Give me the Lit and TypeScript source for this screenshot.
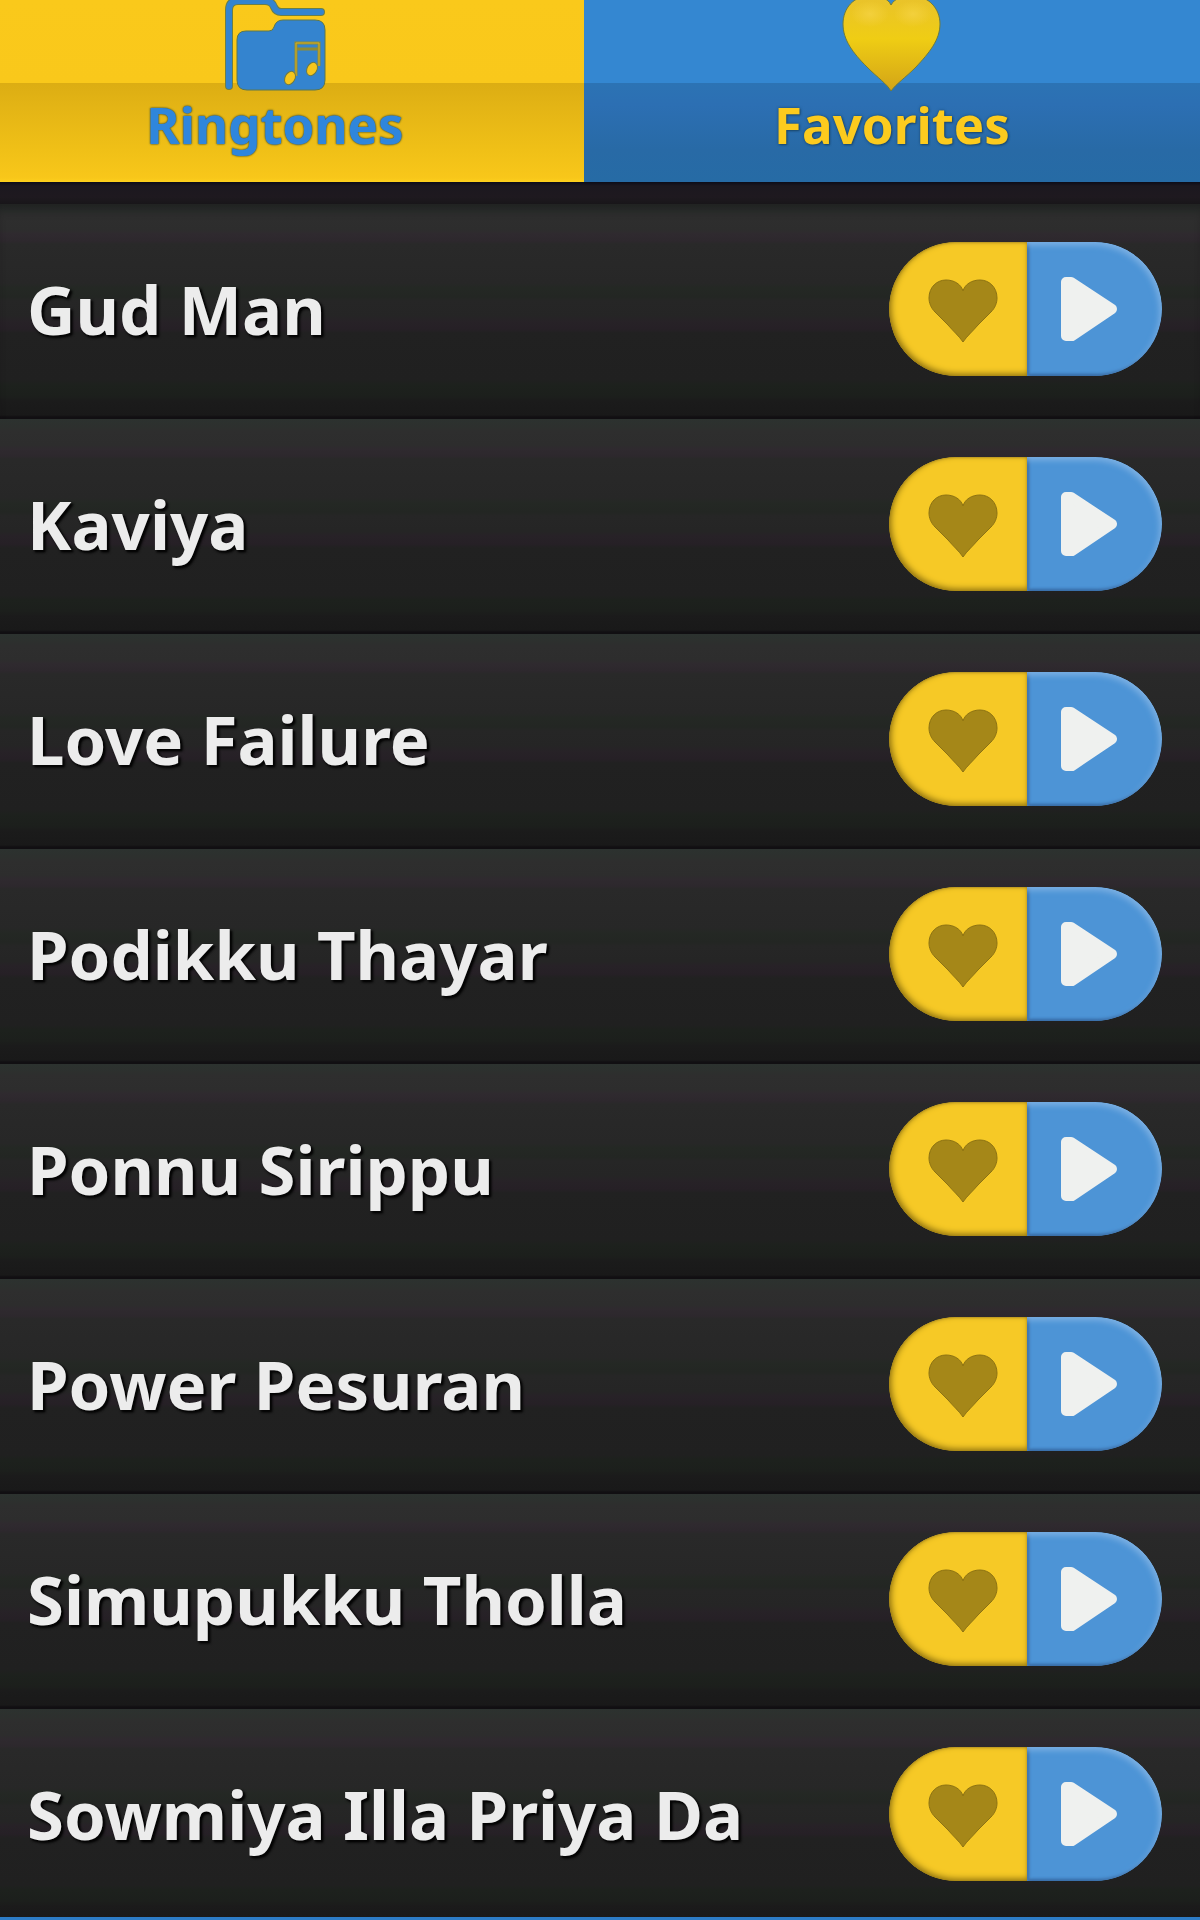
import { LitElement, html, css } from "lit";
import { customElement, property, state } from "lit/decorators.js";
import { classMap } from "lit/directives/class-map.js";

const TRACKS = [
  "Gud Man",
  "Kaviya",
  "Love Failure",
  "Podikku Thayar",
  "Ponnu Sirippu",
  "Power Pesuran",
  "Simupukku Tholla",
  "Sowmiya Illa Priya Da",
];

@customElement("ringtone-row")
class RingtoneRow extends LitElement {
  @property() name = "";
  @state() private liked = false;

  static styles = css`
    :host {
      display: flex;
      align-items: center;
      justify-content: space-between;
      gap: 24px;
      box-sizing: border-box;
      flex: none;
      height: 215px;
      padding: 0 38px 5px 27px;
      background: linear-gradient(
        #2c322f 0, #2d302e 8px,
        #2e2e2e 12px, #2d2d2d 26px,
        #2f2a2f 30px, #2d282d 37px,
        #292929 40px, #272727 79px,
        #242824 84px, #232623 93px,
        #262626 97px, #252525 112px,
        #272227 117px, #262026 125px,
        #212121 129px, #202020 176px,
        #1d211d 181px, #1c1f1c 192px,
        #1b1b1b 197px, #191919 211px,
        #110f12 213px, #110f12 215px
      );
    }
    .name {
      min-width: 0;
      font-size: 67px;
      line-height: 80px;
      font-weight: 700;
      color: #ececec;
      text-shadow: 2px 2px 2px #050505, 2px 2px 3px #050505;
      white-space: nowrap;
    }
    .pill {
      display: flex;
      flex: none;
      width: 273px;
      height: 134px;
      border-radius: 67px;
      overflow: hidden;
    }
    .pill button {
      display: flex;
      align-items: center;
      justify-content: center;
      box-sizing: border-box;
      flex: 1;
      border: 0;
      margin: 0;
      cursor: pointer;
    }
    .pill .like {
      padding: 4px 0 0 10px;
      background: #f6c926;
      border-radius: 67px 0 0 67px;
      box-shadow: inset 2px -2px 6px #8a6e0e, inset 0 1px 2px #c9a42a;
    }
    .pill .play {
      padding: 0 8px 0 0;
      background: #4d94d6;
      border-radius: 0 67px 67px 0;
      box-shadow: inset -2px 3px 6px #7fb2e4, inset 2px -2px 3px #2d609b;
    }
    svg {
      display: block;
    }
    .heart {
      fill: #a58718;
      stroke: #8c7213;
    }
    .liked .heart {
      fill: #d23c2a;
    }
    .triangle {
      fill: #eff1ef;
      stroke: #eff1ef;
    }
  `;

  render() {
    return html`
      <span class="name">${this.name}</span>
      <span class="pill">
        <button
          class=${classMap({ like: true, liked: this.liked })}
          aria-label="Favorite ${this.name}"
          @click=${() => (this.liked = !this.liked)}
        >
          <svg width="70" height="64" viewBox="0 0 70 64">
            <path class="heart" d="M35 63C31 57 26 53 20 46L7 33C3 29 1 24 1 19C1 8 9 1 18 1C26 1 33 5 35 12C37 5 44 1 52 1C61 1 69 8 69 19C69 24 67 29 63 33L50 46C44 53 39 57 35 63Z" />
          </svg>
        </button>
        <button class="play" aria-label="Play ${this.name}">
          <svg width="70" height="66" viewBox="0 0 70 66">
            <path class="triangle" stroke-width="10" stroke-linejoin="round" d="M11 6H16L57 33L17 60H11Z" />
          </svg>
        </button>
      </span>
    `;
  }
}

@customElement("app-root")
class AppRoot extends LitElement {
  static styles = css`
    :host {
      display: flex;
      flex-direction: column;
      height: 100vh;
      overflow: hidden;
      background: #1b191c;
      font-family: "Noto Sans", "Open Sans", sans-serif;
    }
    .tabs {
      display: grid;
      grid-template-columns: 73fr 77fr;
      flex: none;
    }
    .tab {
      display: flex;
      flex-direction: column;
      align-items: center;
      height: 182px;
      border: 0;
      margin: 0;
      padding: 0;
      font: inherit;
      font-size: 51px;
      line-height: 64px;
      font-weight: 700;
      cursor: pointer;
    }
    .tab svg {
      display: block;
      flex: none;
    }
    .tab.ringtones {
      padding-right: 34px;
      color: #2f86dc;
      text-shadow: 0 0 2px #4f5a38, 0 0 2px #4f5a38;
      background: linear-gradient(#fac91b 0, #f9c81b 83px, #dcad13 83px, #e3b415 105px, #f0c017 150px, #f8c71a 178px, #fdd01c 182px);
    }
    .tab.favorites {
      color: #fccb1e;
      text-shadow: 0 0 3px #1c4a70, 1px 1px 2px #1c4a70;
      background: linear-gradient(#3487d1 0, #3487d1 83px, #2c73b4 83px, #2c6fb3 105px, #286aa6 150px, #266ba5 182px);
    }
    .shade {
      flex: none;
      height: 22px;
      background: linear-gradient(#0c0c18 0, #1c181f 4px, #1e191f 15px, #181619 22px);
    }
    .list {
      display: flex;
      flex-direction: column;
      flex: 1;
      min-height: 0;
      overflow-y: auto;
      scrollbar-width: none;
    }
    .list ringtone-row:first-child {
      box-shadow: inset 0 10px 8px -4px rgba(20, 18, 20, 0.5);
    }
    .footer {
      flex: none;
      height: 3px;
      background: #2d7cc6;
    }
  `;

  render() {
    return html`
      <nav class="tabs">
        <button class="tab ringtones">
          <svg width="104" height="92" viewBox="0 0 104 92">
            <g fill="none" stroke-linecap="round" stroke-linejoin="round">
              <path stroke="#6b7f48" stroke-width="8" d="M6 86V10Q6 1 15 1H42Q49 1 51 7Q53 12 58 12H98" />
              <path stroke="#3484cf" stroke-width="6" d="M6 86V10Q6 1 15 1H42Q49 1 51 7Q53 12 58 12H98" />
            </g>
            <path fill="#3484cf" stroke="#5a7650" stroke-width="1" d="M14 40Q14 31 23 31H46Q50 31 51 27Q53 20 60 20H92Q102 20 102 30V80Q102 90 92 90H24Q14 90 14 80Z" />
            <path fill="none" stroke="#8f8b35" stroke-width="3" d="M73 76V43H96V66M74 49H95" />
            <path fill="none" stroke="#d6b024" stroke-width="1" d="M73 76V43H96V66" />
            <g fill="#f6c61c" stroke="#6d7a45" stroke-width="1">
              <ellipse cx="67" cy="78" rx="5" ry="7" transform="rotate(28 67 78)" />
              <ellipse cx="89" cy="69" rx="5" ry="7" transform="rotate(28 89 69)" />
            </g>
          </svg>
          Ringtones
        </button>
        <button class="tab favorites">
          <svg width="104" height="92" viewBox="0 0 104 92">
            <defs>
              <linearGradient id="body" x1="0" y1="0" x2="0" y2="1">
                <stop offset="0" stop-color="#e9c22c" />
                <stop offset="0.45" stop-color="#efcd14" />
                <stop offset="1" stop-color="#d3a417" />
              </linearGradient>
              <radialGradient id="glow">
                <stop offset="0" stop-color="#f3d03c" />
                <stop offset="1" stop-color="#f3d03c" stop-opacity="0" />
              </radialGradient>
            </defs>
            <path fill="url(#body)" stroke="#6f7c3c" stroke-width="1" d="M51 91C47 84 38 78 27 67C13 53 3 40 3 24C3 8 14-4 29-4C40-4 48-2 51 5C55-2 62-4 73-4C88-4 100 8 100 24C100 40 89 53 76 67C65 78 56 84 51 91Z" />
            <ellipse cx="30" cy="14" rx="19" ry="13" fill="url(#glow)" />
            <ellipse cx="73" cy="14" rx="19" ry="13" fill="url(#glow)" />
          </svg>
          Favorites
        </button>
      </nav>
      <div class="shade"></div>
      <main class="list">
        ${TRACKS.map((name) => html`<ringtone-row .name=${name}></ringtone-row>`)}
      </main>
      <div class="footer"></div>
    `;
  }
}
